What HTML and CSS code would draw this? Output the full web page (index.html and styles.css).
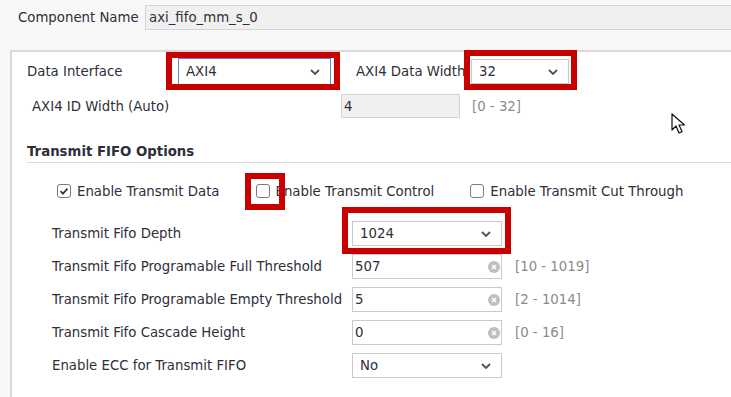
FILE: index.html
```html
<!DOCTYPE html>
<html lang="en">
<head>
    <meta charset="UTF-8">
    <meta name="viewport" content="width=device-width, initial-scale=1.0">
    <title>AXI FIFO Customize IP</title>
    <link rel="stylesheet" href="styles.css">
</head>
<body>

    <div class="top">
        <span class="top-label">Component Name</span>
        <div class="top-input">axi_fifo_mm_s_0</div>
    </div>

    <div class="panel">

        <div class="row row-main">
            <span class="lbl lbl-iface">Data Interface</span>
            <div class="select sel-iface focus mark mark-iface">
                <span>AXI4</span>
                <svg class="chev" viewBox="0 0 10 6"><path d="M1 1l4 4 4-4"/></svg>
            </div>
            <span class="lbl lbl-width">AXI4 Data Width</span>
            <div class="select sel-width mark mark-width">
                <span>32</span>
                <svg class="chev" viewBox="0 0 10 6"><path d="M1 1l4 4 4-4"/></svg>
            </div>
        </div>

        <div class="row row-id">
            <span class="lbl lbl-id">AXI4 ID Width (Auto)</span>
            <div class="input disabled id-input">4</div>
            <span class="range">[0 - 32]</span>
        </div>

        <div class="section">Transmit FIFO Options</div>

        <div class="checks">
            <label class="check">
                <span class="box checked">
                    <svg viewBox="0 0 12 12"><path d="M2.5 6.2l2.4 2.4 4.6-5"/></svg>
                </span>
                Enable Transmit Data
            </label>
            <label class="check">
                <span class="box mark mark-box"></span>
                Enable Transmit Control
            </label>
            <label class="check">
                <span class="box"></span>
                Enable Transmit Cut Through
            </label>
        </div>

        <div class="fields">
            <span class="lbl">Transmit Fifo Depth</span>
            <div class="select mark mark-depth">
                <span>1024</span>
                <svg class="chev" viewBox="0 0 10 6"><path d="M1 1l4 4 4-4"/></svg>
            </div>
            <span></span>

            <span class="lbl">Transmit Fifo Programable Full Threshold</span>
            <div class="input">
                <span>507</span>
                <span class="clear"><svg viewBox="0 0 12 12"><path d="M4 4l4 4M8 4l-4 4"/></svg></span>
            </div>
            <span class="range">[10 - 1019]</span>

            <span class="lbl">Transmit Fifo Programable Empty Threshold</span>
            <div class="input">
                <span>5</span>
                <span class="clear"><svg viewBox="0 0 12 12"><path d="M4 4l4 4M8 4l-4 4"/></svg></span>
            </div>
            <span class="range">[2 - 1014]</span>

            <span class="lbl">Transmit Fifo Cascade Height</span>
            <div class="input">
                <span>0</span>
                <span class="clear"><svg viewBox="0 0 12 12"><path d="M4 4l4 4M8 4l-4 4"/></svg></span>
            </div>
            <span class="range">[0 - 16]</span>

            <span class="lbl">Enable ECC for Transmit FIFO</span>
            <div class="select">
                <span>No</span>
                <svg class="chev" viewBox="0 0 10 6"><path d="M1 1l4 4 4-4"/></svg>
            </div>
            <span></span>
        </div>
    </div>

    <svg class="cursor" viewBox="0 0 14 21">
        <path d="M1 1v16l4-4 3 7 3-1.4-3-6.6h5.5z"/>
    </svg>

</body>
</html>
```

FILE: styles.css
```css
* {
    margin: 0;
    padding: 0;
    box-sizing: border-box;
}

body {
    font-family: 'DejaVu Sans', Verdana, sans-serif;
    font-size: 13.3px;
    color: #2e2e3a;
    background: #f8f8f8;
    width: 731px;
    height: 397px;
    overflow: hidden;
    position: relative;
}


.top {
    display: flex;
    align-items: center;
    padding: 5px 0 0 18px;
}

.top-label {
    width: 127px;
}

.top-input {
    flex: 1;
    height: 25px;
    line-height: 23px;
    padding-left: 3px;
    background: #f0f0f0;
    border: 1px solid #d4d4d4;
    border-right: none;
}


.panel {
    margin: 20px 0 0 10px;
    height: 347px;
    background: #fff;
    border-left: 2px solid #d9d9d9;
    border-top: 2px solid #d9d9d9;
    padding-left: 15px;
}

.row {
    display: flex;
    align-items: center;
}

.row-main {
    margin-top: 6px;
    height: 27px;
}

.lbl-iface {
    width: 151px;
    flex-shrink: 0;
}

.lbl-width {
    width: 115px;
    flex-shrink: 0;
}

.row-id {
    margin-top: 9px;
    height: 24px;
}

.lbl-id {
    margin-left: 5px;
    width: 309px;
}


.select,
.input {
    position: relative;
    display: flex;
    align-items: center;
    justify-content: space-between;
    height: 25px;
    background: #fff;
    border: 1px solid #cacaca;
}

.select {
    padding: 0 10px 0 7px;
}

.input {
    padding: 0 1px 0 2px;
}

.sel-iface {
    width: 153px;
    height: 27px;
    margin-right: 25px;
    flex-shrink: 0;
}

.sel-width {
    width: 98px;
    flex-shrink: 0;
}

.select.focus {
    border-color: #5a8ad6;
}

.input.disabled {
    background: #f0f0f0;
    border-color: #d4d4d4;
}

.id-input {
    width: 119px;
    height: 24px;
}

.chev {
    width: 10px;
    height: 6px;
    fill: none;
    stroke: #505058;
    stroke-width: 1.8;
}

.clear {
    width: 12px;
    height: 12px;
    border-radius: 50%;
    background: #bfbfbf;
    display: flex;
}

.clear svg {
    width: 12px;
    height: 12px;
    fill: none;
    stroke: #fff;
    stroke-width: 1.6;
}

.range {
    color: #8a8a8e;
    margin-left: 12px;
}


.section {
    margin-top: 26px;
    font-weight: bold;
    line-height: 16px;
    padding-bottom: 2px;
    border-bottom: 1px solid #dadada;
}


.checks {
    display: flex;
    align-items: center;
    gap: 36px;
    height: 20px;
    margin-top: 18px;
    padding-left: 30px;
}

.check {
    display: flex;
    align-items: center;
}

.box {
    position: relative;
    width: 14px;
    height: 14px;
    margin-right: 6px;
    border: 1px solid #7a7a7e;
    border-radius: 3px;
    background: #fff;
    display: flex;
}

.box svg {
    width: 12px;
    height: 12px;
    fill: none;
    stroke: #3a3a40;
    stroke-width: 1.8;
}


.fields {
    display: grid;
    grid-template-columns: 300px 150px auto;
    row-gap: 8px;
    align-items: center;
    margin-top: 20px;
    padding-left: 25px;
}

.fields .range {
    margin-left: 13px;
}


/* red annotation frames drawn over the controls */
.mark::after {
    content: '';
    position: absolute;
    border: 6px solid #c80000;
    pointer-events: none;
}

.mark-iface::after {
    top: -7px;
    left: -13px;
    right: -10px;
    bottom: -6px;
}

.mark-width::after {
    top: -10px;
    left: -8px;
    right: -9px;
    bottom: -7px;
}

.mark-box::after {
    top: -12px;
    left: -12px;
    right: -16px;
    bottom: -13px;
}

.mark-depth::after {
    top: -15px;
    left: -11px;
    right: -10px;
    bottom: -9px;
}


.cursor {
    position: absolute;
    left: 671px;
    top: 113px;
    width: 14px;
    height: 21px;
    fill: #fff;
    stroke: #111;
    stroke-width: 1.2;
    stroke-linejoin: round;
}
```
